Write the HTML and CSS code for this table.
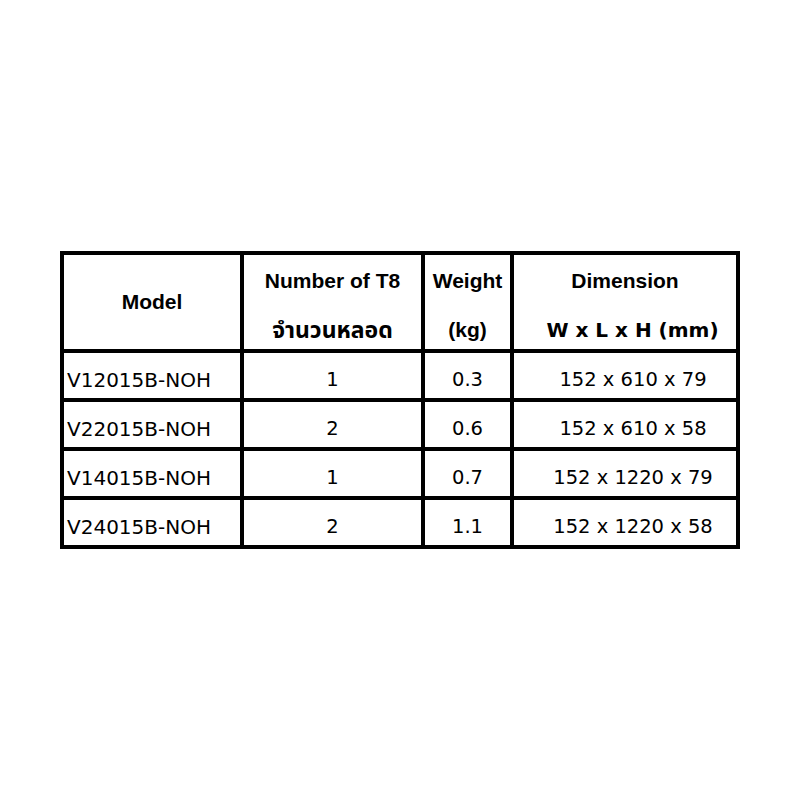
FILE: index.html
```html
<!DOCTYPE html>
<html>
<head>
<meta charset="utf-8">
<link rel="stylesheet" href="styles.css">
</head>
<body>
<div class="page">
  <div class="spec">
    <div class="cell head head-single">Model</div>
    <div class="cell head">
      <div class="l1">Number of T8</div>
      <div class="l2 thai">จำนวนหลอด</div>
    </div>
    <div class="cell head">
      <div class="l1">Weight</div>
      <div class="l2">(kg)</div>
    </div>
    <div class="cell head">
      <div class="l1">Dimension</div>
      <div class="l2 dimline">W x L x H (mm)</div>
    </div>

    <div class="cell body left">V12015B-NOH</div>
    <div class="cell body">1</div>
    <div class="cell body">0.3</div>
    <div class="cell body dim">152 x 610 x 79</div>

    <div class="cell body left">V22015B-NOH</div>
    <div class="cell body">2</div>
    <div class="cell body">0.6</div>
    <div class="cell body dim">152 x 610 x 58</div>

    <div class="cell body left">V14015B-NOH</div>
    <div class="cell body">1</div>
    <div class="cell body">0.7</div>
    <div class="cell body dim">152 x 1220 x 79</div>

    <div class="cell body left">V24015B-NOH</div>
    <div class="cell body">2</div>
    <div class="cell body">1.1</div>
    <div class="cell body dim">152 x 1220 x 58</div>
  </div>
</div>
</body>
</html>
```

FILE: styles.css
```css
html, body {
  margin: 0;
  padding: 0;
  background: #ffffff;
}

.page {
  width: 800px;
  height: 800px;
  padding: 251px 0 0 60px;
  box-sizing: border-box;
}

.spec {
  display: grid;
  grid-template-columns: 176px 177px 85px 222px;
  grid-template-rows: 94px 45px 45px 45px 45px;
  gap: 4px;
  padding: 4px;
  background: #000000;
  width: 680px;
  box-sizing: border-box;
}

.cell {
  background: #ffffff;
  color: #000000;
}

.head {
  display: flex;
  flex-direction: column;
  align-items: center;
  padding-top: 14px;
  box-sizing: border-box;
  font-family: "Liberation Sans", "Noto Sans Thai", "Loma", "Garuda", sans-serif;
  font-weight: bold;
  font-size: 21px;
  line-height: 24px;
  white-space: nowrap;
}

.head-single {
  justify-content: center;
  padding-top: 0;
}

.head .l2 {
  margin-top: 25px;
}

.head .thai {
  font-size: 23px;
}

.head .dimline {
  font-family: "DejaVu Sans", sans-serif;
  font-size: 20px;
  padding-left: 15px;
}

.body {
  display: flex;
  align-items: center;
  justify-content: center;
  padding-top: 8px;
  box-sizing: border-box;
  font-family: "DejaVu Sans", sans-serif;
  font-size: 19.5px;
  line-height: 24px;
  white-space: nowrap;
}

.body.left {
  justify-content: flex-start;
  padding-left: 3px;
  font-size: 20px;
}

.body.dim {
  padding-left: 16px;
}
```
